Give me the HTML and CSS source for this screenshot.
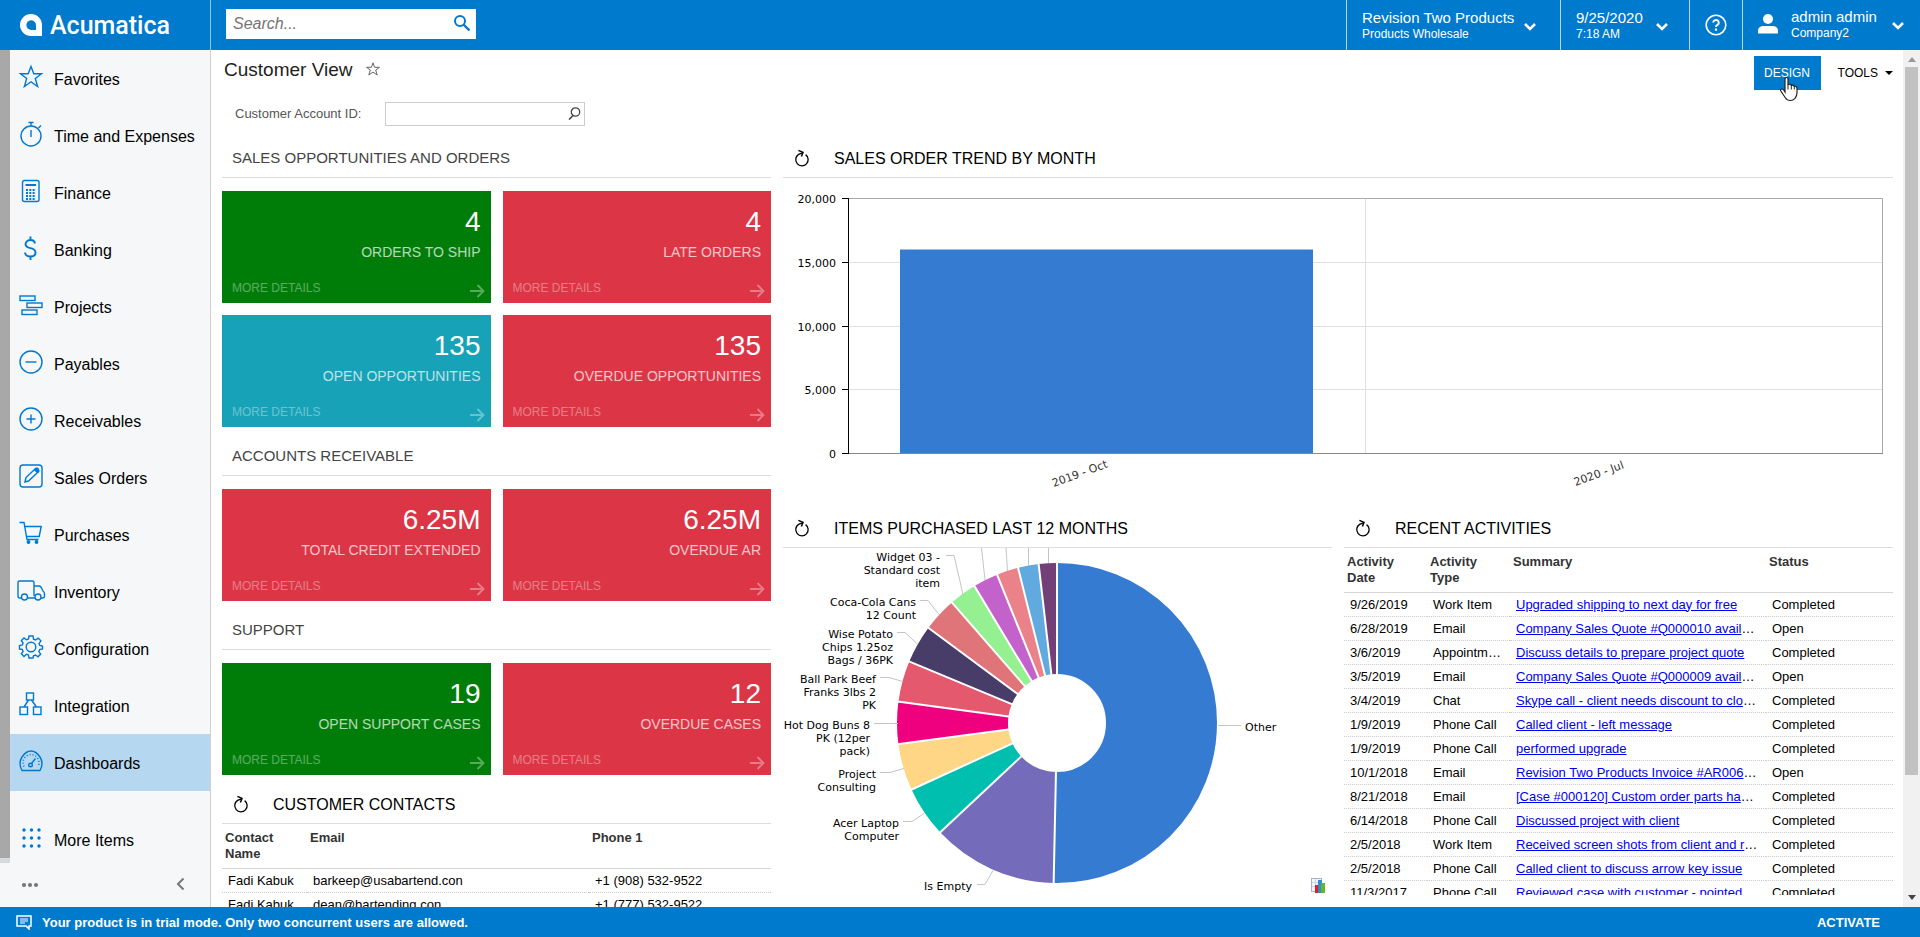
FILE: index.html
```html
<!DOCTYPE html>
<html lang="en">
<head>
    <meta charset="UTF-8">
    <meta name="viewport" content="width=device-width, initial-scale=1.0">
    <title>Customer View</title>
    <link rel="stylesheet" href="styles.css">
</head>
<body>

<!-- shared icon shapes -->
<svg class="sprite" aria-hidden="true">
    <symbol id="refresh" viewBox="0 0 16 18">
        <path d="M11.600 5.600A6.200 6.200 0 1 1 4.600 5.400L8.400 3.800" fill="none" stroke="currentColor" stroke-width="1.300"/>
        <path d="M4.400 1.400L9 3.400 7.400 7.600" fill="none" stroke="currentColor" stroke-width="1.500"/>
    </symbol>
    <symbol id="arrow" viewBox="0 0 15 14">
        <path d="M0 7h13M7.5 1l6 6-6 6" fill="none" stroke="currentColor" stroke-width="1.9"/>
    </symbol>
    <symbol id="chevron" viewBox="0 0 14 10">
        <path d="M2 2l5 5 5-5" fill="none" stroke="currentColor" stroke-width="2.6"/>
    </symbol>
</svg>

<header class="topbar">
    <a class="logo" href="#">
        <svg width="22" height="22" viewBox="0 0 22 22"><path fill="#fff" fill-rule="evenodd" d="M11 0a11 11 0 0 1 11 11v11H11A11 11 0 0 1 11 0zM11 6.200a4.800 4.800 0 0 0-4.600 5 4.800 4.800 0 0 0 4.800 4.800H16v-4.800a5 5 0 0 0-5-5z"/></svg>
        <span>Acumatica</span>
    </a>
    <form class="search">
        <input type="text" placeholder="Search..." aria-label="Search">
        <button type="button" aria-label="Run search">
            <svg width="18" height="18" viewBox="0 0 18 18"><circle cx="7" cy="7" r="5" fill="none" stroke="#007acc" stroke-width="2"/><path d="M10.500 10.500l6 6" stroke="#007acc" stroke-width="2.400"/></svg>
        </button>
    </form>
    <button class="top-item company" type="button">
        <span class="top-text"><span class="big">Revision Two Products</span><span class="small">Products Wholesale</span></span>
        <svg class="chevron"><use href="#chevron"/></svg>
    </button>
    <button class="top-item date" type="button">
        <span class="top-text"><span class="big">9/25/2020</span><span class="small">7:18 AM</span></span>
        <svg class="chevron"><use href="#chevron"/></svg>
    </button>
    <button class="top-item help" type="button" aria-label="Help">
        <svg width="22" height="22" viewBox="0 0 22 22" fill="none" stroke="#fff"><circle cx="11" cy="11" r="9.800" stroke-width="1.600"/><path d="M8.200 8.600a2.800 2.600 0 1 1 4.200 2.300q-1.400.8-1.400 2" stroke-width="1.900"/><path d="M11 14.500v2.200" stroke-width="2.200"/></svg>
    </button>
    <button class="top-item user" type="button">
        <svg width="20" height="20" viewBox="0 0 20 20" fill="#fff"><circle cx="10" cy="5" r="5"/><path d="M0 19.500v-2.500q0-5 6-5h8q6 0 6 5v2.500z"/></svg>
        <span class="top-text"><span class="big">admin admin</span><span class="small">Company2</span></span>
        <svg class="chevron"><use href="#chevron"/></svg>
    </button>
</header>

<div class="workspace">
    <nav class="sidebar">
        <div class="strip"></div>
        <div class="menu">
            <a href="#"><svg viewBox="0 0 24 24"><path d="M12 1.500l2.800 7.300h7.700l-6.200 4.700 2.300 8-6.600-4.700-6.600 4.700 2.300-8L1.500 8.800h7.700z"/></svg>Favorites</a>
            <a href="#"><svg viewBox="0 0 24 24"><circle cx="12" cy="14" r="10"/><path d="M9.500.5h5M12 .5V4M12 8v7M19.500 6l2.500-2.500"/></svg>Time and Expenses</a>
            <a href="#"><svg viewBox="0 0 24 24"><rect x="3.500" y="1.500" width="16.500" height="21" rx="2"/><path d="M6.500 6h10.500" stroke-width="2"/><path d="M7 11h10M7 14h10M7 17h10M7 20h10" stroke-width="1.800" stroke-dasharray="2 1.300"/></svg>Finance</a>
            <a href="#"><svg viewBox="0 0 24 24"><path d="M16 7.500Q15.500 4 11.500 4T6.500 8q0 3 5 4.200t5 4.300q0 4-5 4t-5.500-4M11.500.5V4m0 16.500V24" stroke-width="1.900"/></svg>Banking</a>
            <a href="#"><svg viewBox="0 0 24 24"><rect x="1" y="3" width="15" height="4.500"/><rect x="8" y="10" width="15" height="4.500"/><rect x="3" y="17" width="15" height="4.500"/></svg>Projects</a>
            <a href="#"><svg viewBox="0 0 24 24"><circle cx="12" cy="12" r="11"/><path d="M6.500 12h11"/></svg>Payables</a>
            <a href="#"><svg viewBox="0 0 24 24"><circle cx="12" cy="12" r="11"/><path d="M7.500 12h9M12 7.500v9"/></svg>Receivables</a>
            <a href="#"><svg viewBox="0 0 24 24"><rect x="1" y="1" width="22" height="22" rx="3"/><path d="M6 18l1-4.500L16.500 4.500q2-1 3 1t-1 3L9.500 17z"/><path d="M16 5l3 3" stroke-width="3"/></svg>Sales Orders</a>
            <a href="#"><svg viewBox="0 0 24 24"><path d="M.5 1.500H5L8 18.500h11.500M5.700 5.500h16.500l-2 10H7.500"/><circle cx="9.500" cy="21" r="1.200" fill="#0078d0"/><circle cx="17.500" cy="21" r="1.200" fill="#0078d0"/></svg>Purchases</a>
            <a href="#"><svg viewBox="0 0 24 24"><path d="M2.500 20H1a2 2 0 0 1-2-2V4.500q0-1.500 1.500-1.500H13.500q1.500 0 1.500 1.500V18M8.500 20H16M15 8h5q1.500 0 2.500 2l1.500 3q1.500 1 1.500 3v2q0 2-2 2H22"/><circle cx="5.500" cy="19" r="3"/><circle cx="19" cy="19" r="3"/></svg>Inventory</a>
            <a href="#"><svg viewBox="0 0 24 24"><circle cx="12" cy="12" r="4.800"/><path d="M10 1h4l.5 3.200 2 .8 2.700-1.900 2.700 2.700L20 8.500l.8 2L23.500 11v3l-2.800.6-.8 2 1.800 2.500-2.700 2.700-2.500-1.800-2 .8L14 23h-4l-.5-3-2-.8L5 21.500 2.300 18.800l1.800-2.500-.8-2L.5 14v-3.500l2.800-.5.8-2L2.300 5.500 5 2.900l2.500 1.900 2-.8z"/></svg>Configuration</a>
            <a href="#"><svg viewBox="0 0 24 24"><rect x="7.500" y="1" width="7" height="7"/><rect x="1" y="15" width="7.500" height="7.500"/><rect x="14.500" y="15" width="7.500" height="7.500"/><path d="M9.500 8l-4.500 7M12.500 8l5 7"/></svg>Integration</a>
            <a href="#" class="active"><svg viewBox="0 0 24 24"><path d="M3 21.500Q-1 14 3 8 7 2 12 2t9 6q4 6 0 13.500z"/><path d="M5 17.500a8 8 0 1 1 14 0" stroke-width="1.600" stroke-dasharray="1 2"/><circle cx="11.500" cy="16" r="1.800"/><path d="M12.500 14.500l4-5"/></svg>Dashboards</a>
            <a href="#" class="more"><svg viewBox="0 0 24 24"><path d="M5 4h16M5 12h16M5 20h16" stroke-width="3.400" stroke-linecap="round" stroke-dasharray="0 7.500"/></svg>More Items</a>
            <div class="menu-foot">
                <svg width="18" height="6" viewBox="0 0 18 6" fill="#777"><circle cx="3" cy="3" r="2.100"/><circle cx="9" cy="3" r="2.100"/><circle cx="15" cy="3" r="2.100"/></svg>
                <button type="button" aria-label="Collapse menu"><svg width="9" height="14" viewBox="0 0 9 14"><path d="M7.500 1.500L2 7l5.500 5.500" fill="none" stroke="#777" stroke-width="2"/></svg></button>
            </div>
        </div>
    </nav>

    <main>
        <div class="title-row">
            <h1>Customer View</h1>
            <svg class="star" width="14" height="14" viewBox="0 0 14 14"><path d="M7 .8l1.600 4.500h4.900L9.700 8l1.500 5L7 10.100 2.800 13l1.500-5L.5 5.300h4.900z" fill="none" stroke="#666"/></svg>
            <div class="tools">
                <button class="design" type="button">DESIGN
                    <svg class="pointer" width="20" height="26" viewBox="0 0 20 26"><path d="M6 14V3.200Q6 1.500 7.500 1.500T9 3.200V8.500q3-.8 3.300.8 2.500-.4 3 1 2.700-.3 2.700 2v4.500q0 3-2 5.500-2 2.200-4.500 2.200-3.500 0-5-2.500L1.800 15q-.8-2.300 1.500-2Q4.500 13.300 6 16z" fill="#fff" stroke="#222" stroke-width="1.200"/><path d="M9 8.500v5M12.300 9.300v4.200M15.300 10.300v3.200" stroke="#222"/></svg>
                </button>
                <button class="tools-menu" type="button">TOOLS<svg width="8" height="4" viewBox="0 0 8 4"><path d="M0 0h8L4 4z"/></svg></button>
            </div>
        </div>

        <form class="filter">
            <label for="account">Customer Account ID:</label>
            <div class="lookup">
                <input type="text" id="account">
                <svg width="13" height="13" viewBox="0 0 13 13"><circle cx="7.500" cy="5" r="4.200" fill="none" stroke="#444" stroke-width="1.300"/><path d="M5 8.500L1 12.500" stroke="#444" stroke-width="1.600"/></svg>
            </div>
        </form>

        <div class="dashboard">
            <div class="left">
                <h2 class="group">SALES OPPORTUNITIES AND ORDERS</h2>
                <div class="tiles">
                    <a href="#" class="tile green"><strong>4</strong><span>ORDERS TO SHIP</span><em>MORE DETAILS<svg><use href="#arrow"/></svg></em></a>
                    <a href="#" class="tile red"><strong>4</strong><span>LATE ORDERS</span><em>MORE DETAILS<svg><use href="#arrow"/></svg></em></a>
                    <a href="#" class="tile teal"><strong>135</strong><span>OPEN OPPORTUNITIES</span><em>MORE DETAILS<svg><use href="#arrow"/></svg></em></a>
                    <a href="#" class="tile red"><strong>135</strong><span>OVERDUE OPPORTUNITIES</span><em>MORE DETAILS<svg><use href="#arrow"/></svg></em></a>
                </div>
                <h2 class="group">ACCOUNTS RECEIVABLE</h2>
                <div class="tiles">
                    <a href="#" class="tile red"><strong>6.25M</strong><span>TOTAL CREDIT EXTENDED</span><em>MORE DETAILS<svg><use href="#arrow"/></svg></em></a>
                    <a href="#" class="tile red"><strong>6.25M</strong><span>OVERDUE AR</span><em>MORE DETAILS<svg><use href="#arrow"/></svg></em></a>
                </div>
                <h2 class="group">SUPPORT</h2>
                <div class="tiles">
                    <a href="#" class="tile green"><strong>19</strong><span>OPEN SUPPORT CASES</span><em>MORE DETAILS<svg><use href="#arrow"/></svg></em></a>
                    <a href="#" class="tile red"><strong>12</strong><span>OVERDUE CASES</span><em>MORE DETAILS<svg><use href="#arrow"/></svg></em></a>
                </div>
                <h2 class="widget-title"><svg><use href="#refresh"/></svg>CUSTOMER CONTACTS</h2>
                <table class="grid contacts">
                    <thead>
                        <tr><th>Contact Name</th><th>Email</th><th>Phone 1</th></tr>
                    </thead>
                    <tbody>
                        <tr><td>Fadi Kabuk</td><td>barkeep@usabartend.con</td><td>+1 (908) 532-9522</td></tr>
                        <tr><td>Fadi Kabuk</td><td>dean@bartending.con</td><td>+1 (777) 532-9522</td></tr>
                    </tbody>
                </table>
            </div>

            <section class="trend">
                <h2 class="widget-title"><svg><use href="#refresh"/></svg>SALES ORDER TREND BY MONTH</h2>
                <svg class="chart" viewBox="0 0 1110 321">
                    <path d="M66 84.500h1033M66 148.500h1033M66 211.500h1033M582.500 20v255" stroke="#e0e0e0"/>
                    <path d="M66 20.500h1033.500v255" fill="none" stroke="#aaa"/>
                    <rect x="117" y="71.500" width="413" height="204" fill="#357bd2"/>
                    <path d="M66 275.500h1034" stroke="#888"/>
                    <path d="M65.500 20v256M59 20.500h7M59 84.500h7M59 148.500h7M59 211.500h7M59 275.500h7" stroke="#000"/>
                    <g text-anchor="end">
                        <text x="53" y="25">20,000</text>
                        <text x="53" y="89">15,000</text>
                        <text x="53" y="153">10,000</text>
                        <text x="53" y="216">5,000</text>
                        <text x="53" y="280">0</text>
                    </g>
                    <g text-anchor="middle" fill="#333">
                        <text x="298" y="299" transform="rotate(-20 298 299)">2019 - Oct</text>
                        <text x="817" y="299" transform="rotate(-20 817 299)">2020 - Jul</text>
                    </g>
                </svg>
            </section>

            <section>
                <h2 class="widget-title"><svg><use href="#refresh"/></svg>ITEMS PURCHASED LAST 12 MONTHS</h2>
                <svg class="chart" viewBox="-1 0 549 347">
                    <!-- slices: dash length is the angle in degrees, offset is where it starts -->
                    <g transform="rotate(-90 273 175)" fill="none" stroke-width="111">
                        <circle cx="273" cy="175" r="104.500" pathLength="360" stroke="#357bd2" stroke-dasharray="181.200 360"/>
                        <circle cx="273" cy="175" r="104.500" pathLength="360" stroke="#746cba" stroke-dasharray="45.700 360" stroke-dashoffset="-181.200"/>
                        <circle cx="273" cy="175" r="104.500" pathLength="360" stroke="#00bfaf" stroke-dasharray="18.500 360" stroke-dashoffset="-226.900"/>
                        <circle cx="273" cy="175" r="104.500" pathLength="360" stroke="#ffd586" stroke-dasharray="17 360" stroke-dashoffset="-245.400"/>
                        <circle cx="273" cy="175" r="104.500" pathLength="360" stroke="#ee007f" stroke-dasharray="15.300 360" stroke-dashoffset="-262.400"/>
                        <circle cx="273" cy="175" r="104.500" pathLength="360" stroke="#e5596f" stroke-dasharray="14.900 360" stroke-dashoffset="-277.700"/>
                        <circle cx="273" cy="175" r="104.500" pathLength="360" stroke="#483c69" stroke-dasharray="13.900 360" stroke-dashoffset="-292.600"/>
                        <circle cx="273" cy="175" r="104.500" pathLength="360" stroke="#e07579" stroke-dasharray="12.400 360" stroke-dashoffset="-306.500"/>
                        <circle cx="273" cy="175" r="104.500" pathLength="360" stroke="#94f090" stroke-dasharray="10 360" stroke-dashoffset="-318.900"/>
                        <circle cx="273" cy="175" r="104.500" pathLength="360" stroke="#c462cc" stroke-dasharray="9.100 360" stroke-dashoffset="-328.900"/>
                        <circle cx="273" cy="175" r="104.500" pathLength="360" stroke="#eb8289" stroke-dasharray="7.900 360" stroke-dashoffset="-338"/>
                        <circle cx="273" cy="175" r="104.500" pathLength="360" stroke="#60aadf" stroke-dasharray="7.500 360" stroke-dashoffset="-345.900"/>
                        <circle cx="273" cy="175" r="104.500" pathLength="360" stroke="#733f77" stroke-dasharray="6.600 360" stroke-dashoffset="-353.400"/>
                    </g>
                    <g stroke="#fff" stroke-width="2">
                        <path d="M273 14v114"/>
                        <path d="M273 14v114" transform="rotate(181.200 273 175)"/>
                        <path d="M273 14v114" transform="rotate(226.900 273 175)"/>
                        <path d="M273 14v114" transform="rotate(245.400 273 175)"/>
                        <path d="M273 14v114" transform="rotate(262.400 273 175)"/>
                        <path d="M273 14v114" transform="rotate(277.700 273 175)"/>
                        <path d="M273 14v114" transform="rotate(292.600 273 175)"/>
                        <path d="M273 14v114" transform="rotate(306.500 273 175)"/>
                        <path d="M273 14v114" transform="rotate(318.900 273 175)"/>
                        <path d="M273 14v114" transform="rotate(328.900 273 175)"/>
                        <path d="M273 14v114" transform="rotate(338 273 175)"/>
                        <path d="M273 14v114" transform="rotate(345.900 273 175)"/>
                        <path d="M273 14v114" transform="rotate(353.400 273 175)"/>
                    </g>
                    <path fill="none" stroke="#c4c4c4" d="M162 7.500h8l9 39M136 52.500h8l11 14M113 84.500h8l13 12M96 129.500h9l14 4M90 175.500h24M96 224.500h10l14-4M119 273.500h9l12-8M193 336.500h8l8-14M434 177.500h23M197.500 0l3.500 32M222 0l1.500 23M244.500 0v17M264.500 0v15"/>
                    <g text-anchor="end">
                        <text><tspan x="156" y="13">Widget 03 -</tspan><tspan x="156" y="26">Standard cost</tspan><tspan x="156" y="39">item</tspan></text>
                        <text><tspan x="132" y="58">Coca-Cola Cans</tspan><tspan x="132" y="71">12 Count</tspan></text>
                        <text><tspan x="109" y="90">Wise Potato</tspan><tspan x="109" y="103">Chips 1.25oz</tspan><tspan x="109" y="116">Bags / 36PK</tspan></text>
                        <text><tspan x="92" y="135">Ball Park Beef</tspan><tspan x="92" y="148">Franks 3lbs 2</tspan><tspan x="92" y="161">PK</tspan></text>
                        <text><tspan x="86" y="181">Hot Dog Buns 8</tspan><tspan x="86" y="194">PK (12per</tspan><tspan x="86" y="207">pack)</tspan></text>
                        <text><tspan x="92" y="230">Project</tspan><tspan x="92" y="243">Consulting</tspan></text>
                        <text><tspan x="115" y="279">Acer Laptop</tspan><tspan x="115" y="292">Computer</tspan></text>
                        <text x="188" y="342">Is Empty</text>
                    </g>
                    <text x="461" y="183">Other</text>
                    <!-- chart type picker -->
                    <rect x="527.500" y="330.500" width="10" height="13" fill="#f4f6fb" stroke="#a9b4cc"/>
                    <path d="M528 334.500h10M528 338.500h10M531.500 331v12" stroke="#cdd5e6"/>
                    <rect x="531" y="337" width="4" height="8" fill="#d92231"/>
                    <rect x="534" y="332" width="4" height="13" fill="#2d8fd0"/>
                    <rect x="537" y="335" width="4" height="10" fill="#67b52c"/>
                </svg>
            </section>

            <section class="activities">
                <h2 class="widget-title"><svg><use href="#refresh"/></svg>RECENT ACTIVITIES</h2>
                <div class="scroll">
                    <table class="grid">
                        <thead>
                            <tr><th>Activity Date</th><th>Activity Type</th><th>Summary</th><th>Status</th></tr>
                        </thead>
                        <tbody>
                            <tr><td>9/26/2019</td><td>Work Item</td><td><a href="#">Upgraded shipping to next day for free</a></td><td>Completed</td></tr>
                            <tr><td>6/28/2019</td><td>Email</td><td><a href="#">Company Sales Quote #Q000010 available</a></td><td>Open</td></tr>
                            <tr><td>3/6/2019</td><td>Appointment</td><td><a href="#">Discuss details to prepare project quote</a></td><td>Completed</td></tr>
                            <tr><td>3/5/2019</td><td>Email</td><td><a href="#">Company Sales Quote #Q000009 available</a></td><td>Open</td></tr>
                            <tr><td>3/4/2019</td><td>Chat</td><td><a href="#">Skype call - client needs discount to close deal</a></td><td>Completed</td></tr>
                            <tr><td>1/9/2019</td><td>Phone Call</td><td><a href="#">Called client - left message</a></td><td>Completed</td></tr>
                            <tr><td>1/9/2019</td><td>Phone Call</td><td><a href="#">performed upgrade</a></td><td>Completed</td></tr>
                            <tr><td>10/1/2018</td><td>Email</td><td><a href="#">Revision Two Products Invoice #AR006000</a></td><td>Open</td></tr>
                            <tr><td>8/21/2018</td><td>Email</td><td><a href="#">[Case #000120] Custom order parts have arrived</a></td><td>Completed</td></tr>
                            <tr><td>6/14/2018</td><td>Phone Call</td><td><a href="#">Discussed project with client</a></td><td>Completed</td></tr>
                            <tr><td>2/5/2018</td><td>Work Item</td><td><a href="#">Received screen shots from client and reviewed</a></td><td>Completed</td></tr>
                            <tr><td>2/5/2018</td><td>Phone Call</td><td><a href="#">Called client to discuss arrow key issue</a></td><td>Completed</td></tr>
                            <tr><td>11/3/2017</td><td>Phone Call</td><td><a href="#">Reviewed case with customer - pointed out</a></td><td>Completed</td></tr>
                        </tbody>
                    </table>
                </div>
            </section>
        </div>
    </main>

    <div class="scrollbar">
        <svg width="8" height="5" viewBox="0 0 8 5"><path d="M4 0l4 5H0z" fill="#999"/></svg>
        <div class="rail"><div class="thumb"></div></div>
        <svg width="8" height="5" viewBox="0 0 8 5"><path d="M0 0h8L4 5z" fill="#444"/></svg>
    </div>
</div>

<footer>
    <svg width="16" height="15" viewBox="0 0 16 15" fill="none" stroke="#fff" stroke-width="1.500"><path d="M1 1h14v10h-2v3l-3-3H1z"/><path d="M4 4h8M4 6h8M4 8h5" stroke-width="1.200"/></svg>
    <p>Your product is in trial mode. Only two concurrent users are allowed.</p>
    <button type="button">ACTIVATE</button>
</footer>

</body>
</html>
```
FILE: styles.css
```css
* {
    box-sizing: border-box;
}

body, h1, h2, p {
    margin: 0;
    font-weight: normal;
}

body, input, button {
    font-family: "Liberation Sans", Arial, sans-serif;
}

body {
    display: flex;
    flex-direction: column;
    height: 100vh;
    overflow: hidden;
    background: #fff;
    font-size: 13px;
}

button {
    border: none;
    background: none;
    padding: 0;
    cursor: pointer;
}

a {
    text-decoration: none;
}

.sprite {
    position: absolute;
    width: 0;
    height: 0;
}

/* top bar */

.topbar {
    display: flex;
    align-items: stretch;
    height: 50px;
    flex: none;
    background: #007acc;
    color: #fff;
}

.logo {
    display: flex;
    align-items: center;
    gap: 8px;
    width: 211px;
    padding-left: 20px;
    border-right: 1px solid #8fc4ea;
    color: #fff;
    font-family: Roboto, "Open Sans", sans-serif;
    font-size: 25px;
    font-weight: 500;
}

.search {
    display: flex;
    align-items: center;
    width: 250px;
    height: 30px;
    margin: 9px auto 0 15px;
    padding: 0 5px 0 7px;
    background: #fff;
}

.search input {
    flex: 1;
    min-width: 0;
    border: none;
    outline: none;
    padding: 0;
    font-size: 16px;
    font-style: italic;
}

.search button {
    height: 20px;
}

.top-item {
    display: flex;
    align-items: center;
    border-left: 1px solid #b3d7f0;
    color: #fff;
    text-align: left;
}

.top-text {
    flex: 1;
}

.big, .small {
    display: block;
    white-space: nowrap;
}

.big {
    font-size: 15px;
    line-height: 17px;
}

.small {
    font-size: 12px;
    line-height: 16px;
}

.chevron {
    width: 14px;
    height: 10px;
    margin-top: 4px;
}

.company {
    width: 214px;
    padding: 0 23px 0 15px;
}

.date {
    width: 129px;
    padding: 0 20px 0 15px;
}

.help {
    width: 53px;
    justify-content: center;
}

.user {
    width: 178px;
    padding: 0 15px 2px;
    gap: 13px;
}

/* body of the page */

.workspace {
    display: flex;
    flex: 1;
    min-height: 0;
}

.sidebar {
    display: flex;
    width: 211px;
    flex: none;
    background: #f5f7f9;
    border-right: 1px solid #d0d0d0;
}

.strip {
    width: 10px;
    margin-bottom: 44px;
    background: #a8a8a8;
    border-bottom: 5px solid #d9d9dc;
}

.menu {
    display: flex;
    flex-direction: column;
    flex: 1;
}

.menu a {
    display: flex;
    align-items: center;
    gap: 11px;
    height: 57px;
    flex: none;
    padding: 2px 0 0 9px;
    color: #000;
    font-size: 16px;
}

.menu a svg {
    width: 24px;
    height: 24px;
    margin-bottom: 6px;
    overflow: visible;
    fill: none;
    stroke: #0078d0;
    stroke-width: 1.4;
}

.menu a.active {
    background: #b5d7ef;
}

.menu a.more {
    margin-top: 20px;
}

.menu-foot {
    display: flex;
    align-items: center;
    justify-content: space-between;
    flex: 1;
    padding: 0 25px 5px 11px;
}

main {
    display: flex;
    flex-direction: column;
    flex: 1;
    min-width: 0;
    overflow: hidden;
    padding: 0 10px 0 11px;
}

.title-row {
    display: flex;
    align-items: center;
    gap: 14px;
    height: 40px;
    flex: none;
    padding-left: 2px;
}

h1 {
    font-size: 19px;
    color: #222;
}

.star {
    margin-bottom: 3px;
}

.tools {
    display: flex;
    margin-left: auto;
    padding-top: 6px;
}

.tools button {
    height: 34px;
    font-size: 12px;
}

.design {
    position: relative;
    width: 67px;
    background: #007acc;
    color: #fff;
}

.pointer {
    position: absolute;
    left: 25px;
    top: 20px;
}

.tools-menu {
    display: flex;
    align-items: center;
    gap: 7px;
    padding: 0 0 0 17px;
}

.filter {
    display: flex;
    align-items: center;
    height: 39px;
    flex: none;
    padding: 8px 0 0 13px;
    color: #555;
}

.filter label {
    width: 150px;
}

.lookup {
    display: flex;
    align-items: center;
    width: 200px;
    height: 24px;
    padding: 0 3px;
    border: 1px solid #ccc;
}

.lookup input {
    flex: 1;
    min-width: 0;
    border: none;
    outline: none;
}

/* dashboard */

.dashboard {
    display: grid;
    grid-template-columns: repeat(3, minmax(0, 1fr));
    grid-template-rows: auto 1fr;
    column-gap: 12px;
    align-items: start;
    flex: 1;
    min-height: 0;
}

.left {
    grid-row: 1 / 3;
}

.trend {
    grid-column: 2 / 4;
}

.group, .widget-title {
    display: flex;
    align-items: center;
    height: 49px;
    padding-left: 10px;
    border-bottom: 1px solid #ddd;
}

.group {
    padding-top: 9px;
    color: #444;
    font-size: 15px;
}

.widget-title {
    padding-top: 11px;
    color: #000;
    font-size: 16px;
}

.widget-title svg {
    width: 16px;
    height: 18px;
    margin: 0 24px 2px 1px;
}

.tiles {
    display: grid;
    grid-template-columns: 1fr 1fr;
    gap: 12px;
    padding-top: 13px;
}

.tile {
    display: flex;
    flex-direction: column;
    height: 112px;
    padding: 15px 10px 0;
    color: #fff;
    text-align: right;
}

.green { background: #007d08; }
.red { background: #dc3545; }
.teal { background: #17a2b8; }

.tile strong {
    font-size: 28px;
    font-weight: normal;
    line-height: 32px;
}

.tile span {
    padding-top: 5px;
    font-size: 14px;
    line-height: 18px;
    opacity: 0.7;
}

.tile em {
    display: flex;
    align-items: center;
    justify-content: space-between;
    padding-top: 17px;
    font-size: 12px;
    font-style: normal;
    line-height: 14px;
    opacity: 0.35;
}

.tile em svg {
    width: 15px;
    height: 14px;
    margin: 6px -4px 0 0;
}

.chart {
    display: block;
    width: 100%;
    font-family: "DejaVu Sans", Verdana, sans-serif;
    font-size: 11px;
}

.scroll {
    height: 347px;
    overflow: hidden;
}

.grid {
    width: 100%;
    table-layout: fixed;
    border-collapse: collapse;
}

.grid th {
    height: 44px;
    padding: 6px 3px 5px;
    border-bottom: 1px solid #d5d5d5;
    line-height: 16px;
    text-align: left;
    vertical-align: top;
    color: #333;
}

.grid td {
    height: 24px;
    padding: 0 6px;
    border-bottom: 1px dotted #ccc;
    overflow: hidden;
    white-space: nowrap;
    text-overflow: ellipsis;
}

.grid td a {
    color: #00e;
    text-decoration: underline;
}

.activities th:nth-child(1) { width: 83px; }
.activities th:nth-child(2) { width: 83px; }
.activities th:nth-child(3) { width: 256px; }

.contacts th:nth-child(1) { width: 85px; }
.contacts th:nth-child(2) { width: 282px; }

.scrollbar {
    display: flex;
    flex-direction: column;
    align-items: center;
    width: 17px;
    flex: none;
    padding: 7px 0;
    background: #f1f1f1;
}

.rail {
    flex: 1;
    width: 13px;
    padding: 5px 0;
}

.thumb {
    height: 86%;
    background: #c1c1c1;
}

footer {
    display: flex;
    align-items: center;
    gap: 10px;
    height: 30px;
    flex: none;
    padding: 0 40px 0 16px;
    background: #007acc;
    color: #fff;
    font-weight: bold;
}

footer p {
    flex: 1;
    font-weight: bold;
}

footer button {
    color: #fff;
    font-size: 13px;
    font-weight: bold;
}
```
